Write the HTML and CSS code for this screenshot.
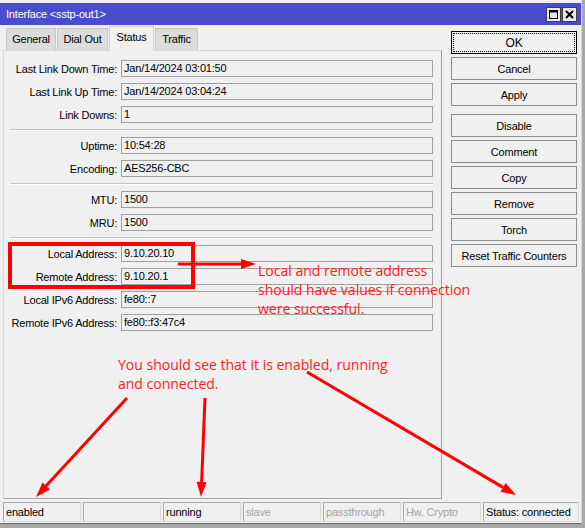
FILE: index.html
```html
<!DOCTYPE html>
<html>
<head>
<meta charset="utf-8">
<link rel="stylesheet" href="styles.css">
</head>
<body>
<div class="window">
  <div class="titlebar">
    <span class="title">Interface &lt;sstp-out1&gt;</span>
    <div class="wbtns">
      <span class="wbtn"><svg width="15" height="15" viewBox="0 0 15 15"><rect x="3.5" y="3.5" width="8" height="8" fill="none" stroke="#000" stroke-width="1"/><line x1="3" y1="4.5" x2="12" y2="4.5" stroke="#000" stroke-width="2"/></svg></span>
      <span class="wbtn"><svg width="15" height="15" viewBox="0 0 15 15"><path d="M4 4 L11 11 M11 4 L4 11" stroke="#000" stroke-width="2"/></svg></span>
    </div>
  </div>
  <div class="main">
    <div class="left">
      <div class="tabs">
        <span class="tab">General</span>
        <span class="tab">Dial Out</span>
        <span class="tab active">Status</span>
        <span class="tab">Traffic</span>
      </div>
      <div class="panel">
        <div class="row"><span class="lbl">Last Link Down Time:</span><span class="fld">Jan/14/2024 03:01:50</span></div>
        <div class="row"><span class="lbl">Last Link Up Time:</span><span class="fld">Jan/14/2024 03:04:24</span></div>
        <div class="row"><span class="lbl">Link Downs:</span><span class="fld">1</span></div>
        <div class="sep"></div>
        <div class="row"><span class="lbl">Uptime:</span><span class="fld">10:54:28</span></div>
        <div class="row"><span class="lbl">Encoding:</span><span class="fld">AES256-CBC</span></div>
        <div class="sep"></div>
        <div class="row"><span class="lbl">MTU:</span><span class="fld">1500</span></div>
        <div class="row"><span class="lbl">MRU:</span><span class="fld">1500</span></div>
        <div class="sep"></div>
        <div class="row"><span class="lbl">Local Address:</span><span class="fld">9.10.20.10</span></div>
        <div class="row"><span class="lbl">Remote Address:</span><span class="fld">9.10.20.1</span></div>
        <div class="row"><span class="lbl">Local IPv6 Address:</span><span class="fld">fe80::7</span></div>
        <div class="row"><span class="lbl">Remote IPv6 Address:</span><span class="fld">fe80::f3:47c4</span></div>
      </div>
    </div>
    <div class="buttons">
      <span class="btn ok"><span class="focus">OK</span></span>
      <span class="btn">Cancel</span>
      <span class="btn">Apply</span>
      <span class="btn gap">Disable</span>
      <span class="btn">Comment</span>
      <span class="btn">Copy</span>
      <span class="btn">Remove</span>
      <span class="btn">Torch</span>
      <span class="btn">Reset Traffic Counters</span>
    </div>
  </div>
  <div class="statusbar">
    <span class="cell">enabled</span>
    <span class="cell"></span>
    <span class="cell">running</span>
    <span class="cell dim">slave</span>
    <span class="cell dim">passthrough</span>
    <span class="cell dim">Hw. Crypto</span>
    <span class="cell wide">Status: connected</span>
  </div>
</div>

<svg class="annot" width="585" height="528" viewBox="0 0 585 528">
  <g fill="#ff0000" stroke="#ff0000">
    <rect x="10" y="244" width="183" height="43" fill="none" stroke-width="4"/>
    <line x1="178" y1="264" x2="243" y2="264" stroke-width="3"/>
    <polygon points="256,264 241,259 241,269" stroke="none"/>
    <line x1="127" y1="398" x2="46" y2="486" stroke-width="3"/>
    <polygon points="36,497 49.9,489.4 42.5,482.6" stroke="none"/>
    <line x1="205" y1="398" x2="201.6" y2="483" stroke-width="3"/>
    <polygon points="201,497 206.6,482.2 196.6,481.8" stroke="none"/>
    <line x1="307" y1="372" x2="503" y2="487.4" stroke-width="3"/>
    <polygon points="516,495 500.6,491.7 505.6,483.1" stroke="none"/>
  </g>
</svg>
<div class="note note1">Local and remote address<br>should have values if connection<br>were successful.</div>
<div class="note note2">You should see that it is enabled, running<br>and connected.</div>
</body>
</html>
```
FILE: styles.css
```css
html, body {
  margin: 0;
  padding: 0;
}
body {
  width: 585px;
  height: 528px;
  background: #a8a8a8;
  font-family: "Liberation Sans", Arial, sans-serif;
  font-size: 11px;
  letter-spacing: -0.2px;
  color: #000;
  position: relative;
  overflow: hidden;
}
.window {
  width: 581px;
  height: 523px;
  background: #f0f0f0;
  border-right: 1px solid #d8d8d8;
  border-bottom: 1px solid #6a6a6a;
  display: flex;
  flex-direction: column;
}
.titlebar {
  margin-top: 3px;
  height: 22px;
  background: #4a4dcb;
  display: flex;
  align-items: center;
  justify-content: space-between;
  padding: 0 4px 0 6px;
}
.title {
  color: #fff;
  font-size: 11px;
}
.wbtns {
  display: flex;
  gap: 1px;
}
.wbtn {
  width: 15px;
  height: 15px;
  background: #e8e8e8;
  box-shadow: inset 0 0 0 1px #404040;
  display: block;
}
.wbtn svg { display: block; }
.main {
  display: flex;
  padding-left: 3px;
  gap: 9px;
}
.left {
  width: 439px;
}
.tabs {
  display: flex;
  align-items: flex-end;
  height: 24px;
  padding-left: 3px;
  margin-top: 1px;
}
.tab {
  height: 22px;
  line-height: 21px;
  padding: 0;
  text-align: center;
  white-space: nowrap;
  background: #dcdcdc;
  border: 1px solid #c8c8c8;
  border-bottom: 0;
  margin-right: 1px;
  box-sizing: border-box;
}
.tab:nth-child(1) { width: 50px; }
.tab:nth-child(2) { width: 51px; }
.tab:nth-child(3) { width: 45px; }
.tab:nth-child(4) { width: 43px; }
.tab.active {
  background: #f0f0f0;
  height: 25px;
  line-height: 21px;
  border-color: #d0d0d0;
  position: relative;
  z-index: 1;
  margin-bottom: -1px;
}
.panel {
  height: 449px;
  box-sizing: border-box;
  border: 1px solid #a0a0a0;
  border-top-color: #d8d8d8;
  border-left-color: #d8d8d8;
  padding: 9px 8px 0 0;
}
.row {
  display: flex;
  align-items: center;
  height: 17px;
  margin-bottom: 6px;
}
.lbl {
  width: 113px;
  text-align: right;
  margin-right: 4px;
  white-space: nowrap;
}
.fld {
  flex: 1;
  height: 17px;
  box-sizing: border-box;
  border: 1px solid #a0a0a0;
  padding-left: 2px;
  line-height: 15px;
  white-space: nowrap;
}
.sep {
  height: 0;
  border-top: 1px solid #c4c4c4;
  border-bottom: 1px solid #ffffff;
  margin: 0 0 6px 6px;
}
.buttons {
  width: 126px;
  margin-top: 6px;
  display: flex;
  flex-direction: column;
  gap: 3px;
}
.btn {
  height: 23px;
  box-sizing: border-box;
  border: 1px solid #8c8c8c;
  background: #f0f0f0;
  display: flex;
  align-items: center;
  justify-content: center;
  white-space: nowrap;
}
.btn.gap { margin-top: 5px; }
.btn.ok {
  border-color: #000;
  padding: 1px;
  font-size: 12px;
}
.btn.ok .focus {
  width: 100%;
  height: 100%;
  box-sizing: border-box;
  border: 1px dotted #000;
  display: flex;
  align-items: center;
  justify-content: center;
}
.statusbar {
  display: flex;
  gap: 2px;
  padding-left: 3px;
  margin-top: 3px;
}
.cell {
  width: 78px;
  height: 20px;
  box-sizing: border-box;
  border: 1px solid #a8a8a8;
  border-right-color: #d8d8d8;
  border-bottom-color: #d8d8d8;
  line-height: 18px;
  padding-left: 2px;
  white-space: nowrap;
}
.cell.dim { color: #a4a4a4; }
.cell.wide { width: 96px; }
.annot {
  position: absolute;
  left: 0;
  top: 0;
  pointer-events: none;
}
.note {
  position: absolute;
  color: #ff1c1c;
  font-family: "Open Sans", "DejaVu Sans", sans-serif;
  font-size: 14px;
  letter-spacing: 0;
  line-height: 19px;
  white-space: nowrap;
}
.note1 { left: 258px; top: 261px; }
.note2 { left: 118px; top: 355px; }
```
